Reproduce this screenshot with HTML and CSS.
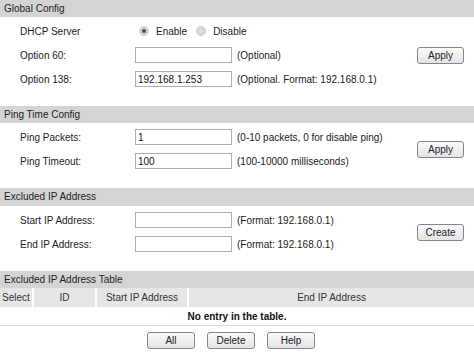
FILE: index.html
```html
<!DOCTYPE html>
<html>
  <head>
    <meta http-equiv="Content-type" content="text/html; charset=utf-8" />
    <title>DHCP Server Config</title>
    <link rel="stylesheet" href="styles.css">
  </head>
  <body>
    <div class="section">
      <div class="bar">Global Config</div>
      <div class="form">
        <div class="label">DHCP Server</div>
        <div class="radios">
          <input type="radio" name="dhcp" checked /><span>Enable</span>
          <input type="radio" name="dhcp" /><span>Disable</span>
        </div>
        <div></div>
        <div></div>
        <div class="label">Option 60:</div>
        <div><input type="text" class="field" /></div>
        <div class="note">(Optional)</div>
        <div class="act"><button>Apply</button></div>
        <div class="label">Option 138:</div>
        <div><input type="text" class="field" value="192.168.1.253" /></div>
        <div class="note">(Optional. Format: 192.168.0.1)</div>
        <div></div>
      </div>
    </div>

    <div class="section">
      <div class="bar">Ping Time Config</div>
      <div class="form">
        <div class="label">Ping Packets:</div>
        <div><input type="text" class="field" value="1" /></div>
        <div class="note">(0-10 packets, 0 for disable ping)</div>
        <div class="act span2"><button>Apply</button></div>
        <div class="label">Ping Timeout:</div>
        <div><input type="text" class="field" value="100" /></div>
        <div class="note">(100-10000 milliseconds)</div>
      </div>
    </div>

    <div class="section">
      <div class="bar tall">Excluded IP Address</div>
      <div class="form">
        <div class="label">Start IP Address:</div>
        <div><input type="text" class="field" /></div>
        <div class="note">(Format: 192.168.0.1)</div>
        <div class="act span2"><button>Create</button></div>
        <div class="label">End IP Address:</div>
        <div><input type="text" class="field" /></div>
        <div class="note">(Format: 192.168.0.1)</div>
      </div>
    </div>

    <div class="bar">Excluded IP Address Table</div>
    <table class="list">
      <tr>
        <th class="c-sel">Select</th>
        <th class="c-id">ID</th>
        <th class="c-start">Start IP Address</th>
        <th>End IP Address</th>
      </tr>
      <tr>
        <td colspan="4" class="empty">No entry in the table.</td>
      </tr>
    </table>
    <div class="buttons">
      <button>All</button>
      <button>Delete</button>
      <button>Help</button>
    </div>
  </body>
</html>
```

FILE: styles.css
```css
body {
  margin: 0;
  background-color: white;
  color: #222;
  font-family: "Liberation Sans", Arial, sans-serif;
  font-size: 10px;
}
.bar {
  background-color: #d4d4d4;
  color: #222;
  height: 17px;
  line-height: 17px;
  padding-left: 4px;
}
.bar.tall {
  height: 18px;
  line-height: 18px;
}
.form {
  display: grid;
  grid-template-columns: 135px 102px 1fr 57px;
  grid-auto-rows: 24px;
  align-items: center;
  padding: 2px 0 15px;
}
.label {
  padding-left: 20px;
}
.field {
  box-sizing: border-box;
  width: 97px;
  height: 16px;
  margin: 0;
  padding: 0 2px;
  border: 1px solid #a9b0ba;
  font-family: "Liberation Sans", Arial, sans-serif;
  font-size: 10px;
  color: #111;
  display: block;
}
.note {
  color: #222;
}
.act {
  display: flex;
}
.span2 {
  grid-row: span 2;
}
.radios {
  display: flex;
  align-items: center;
  white-space: nowrap;
}
.radios input {
  appearance: none;
  flex: none;
  width: 10px;
  height: 10px;
  margin: 0 7px 0 4px;
  border-radius: 50%;
  background: radial-gradient(circle, #e4e4e4 0, #cacaca 100%);
  border: 1px solid #d2d2d2;
  box-sizing: border-box;
}
.radios input:checked {
  background: radial-gradient(circle, #444 0, #555 1.5px, #d0d0d0 2.5px, #c4c4c4 100%);
}
.radios span {
  margin-right: 5px;
}
button {
  box-sizing: border-box;
  width: 47px;
  height: 17px;
  padding: 0;
  border: 1px solid #7c8796;
  border-radius: 3px;
  background: linear-gradient(#fbfbfb, #e4e4e4);
  color: #222;
  font-family: "Liberation Sans", Arial, sans-serif;
  font-size: 10px;
  cursor: pointer;
}
.list {
  width: 100%;
  border-collapse: collapse;
}
.list th {
  background-color: #e6e6e6;
  font-weight: normal;
  color: #333;
  height: 19px;
  padding: 0;
  border-left: 2px solid white;
}
.list th.c-sel {
  width: 30px;
  border-left: 0;
  text-align: left;
  padding-left: 2px;
}
.list th.c-id {
  width: 61px;
}
.list th.c-start {
  width: 90px;
}
.empty {
  height: 18px;
  padding: 0;
  text-align: center;
  font-weight: bold;
  color: #111;
  border-bottom: 1px solid #ddd;
}
.buttons {
  display: flex;
  justify-content: center;
  gap: 12px;
  padding: 6px 12px 0 0;
}
.buttons button {
  width: 48px;
}
```
